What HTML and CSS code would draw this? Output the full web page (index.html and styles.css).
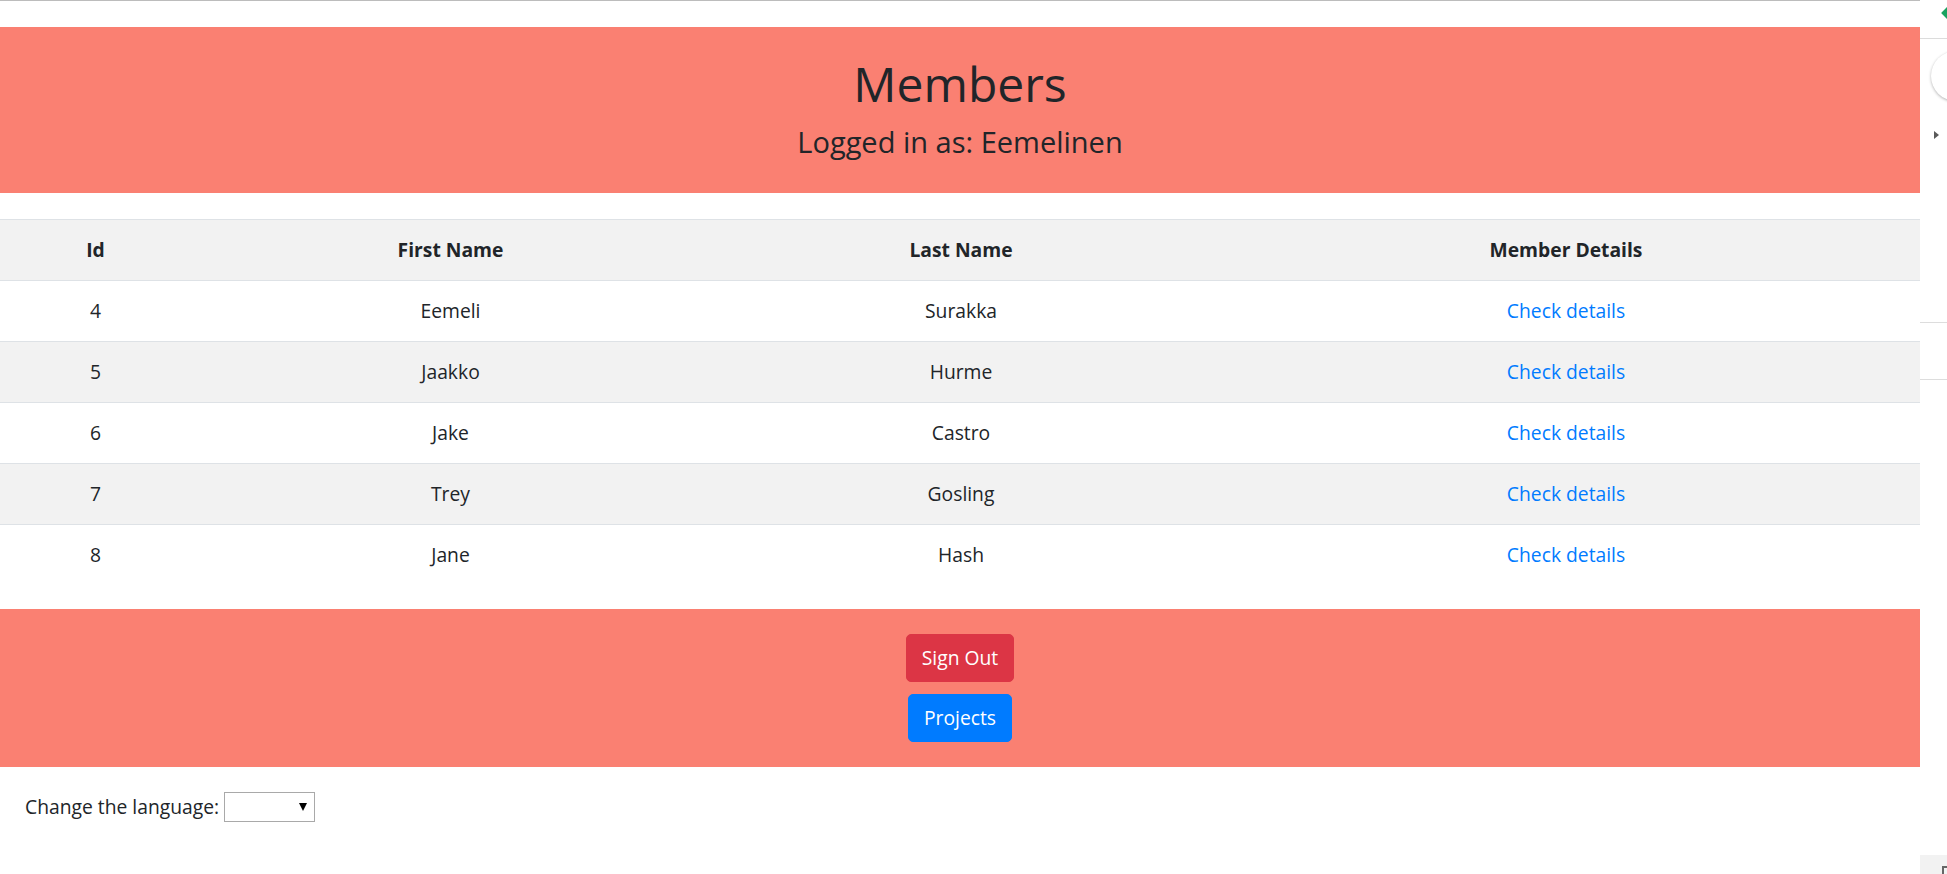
FILE: index.html
```html
<!DOCTYPE html>
<html lang="en">
<head>
<meta charset="utf-8">
<title>Members</title>
<link rel="stylesheet" href="styles.css">
</head>
<body>
<div class="layout">
  <main class="page">
    <header class="banner">
      <h1 class="banner-title">Members</h1>
      <h4 class="banner-sub">Logged in as: Eemelinen</h4>
    </header>

    <table class="members">
      <colgroup>
        <col class="c-id">
        <col class="c-first">
        <col class="c-last">
        <col class="c-details">
      </colgroup>
      <thead>
        <tr><th>Id</th><th>First Name</th><th>Last Name</th><th>Member Details</th></tr>
      </thead>
      <tbody>
        <tr><td>4</td><td>Eemeli</td><td>Surakka</td><td><a href="#">Check details</a></td></tr>
        <tr><td>5</td><td>Jaakko</td><td>Hurme</td><td><a href="#">Check details</a></td></tr>
        <tr><td>6</td><td>Jake</td><td>Castro</td><td><a href="#">Check details</a></td></tr>
        <tr><td>7</td><td>Trey</td><td>Gosling</td><td><a href="#">Check details</a></td></tr>
        <tr><td>8</td><td>Jane</td><td>Hash</td><td><a href="#">Check details</a></td></tr>
      </tbody>
    </table>

    <footer class="actions">
      <button class="btn btn-danger" type="button">Sign Out</button>
      <button class="btn btn-primary" type="button">Projects</button>
    </footer>

    <div class="lang">
      <label class="lang-label" for="lang">Change the language:</label>
      <span class="select-wrap"><select id="lang" class="lang-select"><option></option></select></span>
    </div>
  </main>

  <aside class="side">
    <div class="side-top"><span class="side-diamond"></span></div>
    <div class="side-circle"></div>
    <div class="side-tri"></div>
    <div class="side-line side-line-a"></div>
    <div class="side-line side-line-b"></div>
    <div class="side-spacer"></div>
    <div class="side-foot"><span class="side-corner"></span></div>
  </aside>
</div>
</body>
</html>
```

FILE: styles.css
```css
html, body {
  margin: 0;
  padding: 0;
  background: #ffffff;
}

body {
  font-family: "Open Sans", "Noto Sans", sans-serif;
  font-size: 19.3px;
  line-height: 30px;
  color: #212529;
  overflow: hidden;
}

.layout {
  display: flex;
  width: 1947px;
  height: 874px;
}

.page {
  width: 1920px;
  flex: 0 0 1920px;
  border-top: 1px solid #bcbcbc;
}

/* banner */
.banner {
  margin-top: 26px;
  background: #fa8072;
  text-align: center;
  padding: 27px 0 33px;
}

.banner-title {
  margin: 0 0 10px;
  font-size: 48px;
  line-height: 60px;
  font-weight: 500;
}

.banner-sub {
  margin: 0;
  font-size: 29px;
  line-height: 36px;
  font-weight: 500;
}

/* table */
.members {
  width: 1920px;
  margin-top: 26px;
  margin-bottom: 24px;
  border-collapse: collapse;
  table-layout: fixed;
}

.c-id { width: 191px; }
.c-first { width: 519px; }
.c-last { width: 502px; }
.c-details { width: 708px; }

.members th,
.members td {
  padding: 15px 0;
  line-height: 30px;
  text-align: center;
  border-top: 1px solid #dee2e6;
}

.members th {
  font-weight: 700;
}

.members thead tr,
.members tbody tr:nth-child(even) {
  background: #f2f2f2;
}

.members a {
  color: #007bff;
  text-decoration: none;
}

/* actions */
.actions {
  background: #fa8072;
  padding: 25px 0;
  display: flex;
  flex-direction: column;
  align-items: center;
  gap: 12px;
}

.btn {
  font-family: inherit;
  font-size: 19.3px;
  line-height: 30px;
  padding: 8px 15px;
  border-radius: 5px;
  color: #ffffff;
  cursor: pointer;
}

.btn-danger {
  background: #dc3545;
  border: 1px solid #dc3545;
}

.btn-primary {
  background: #007bff;
  border: 1px solid #007bff;
}

/* language */
.lang {
  display: flex;
  align-items: center;
  padding: 25px 25px;
}

.lang-label {
  margin-right: 5px;
}

.select-wrap {
  position: relative;
  display: inline-block;
}

.lang-select {
  appearance: none;
  -webkit-appearance: none;
  width: 91px;
  height: 30px;
  border: 1px solid #a9a9a9;
  border-radius: 0;
  background: #ffffff;
  margin: 0;
  display: block;
}

.select-wrap::after {
  content: "";
  position: absolute;
  right: 8px;
  top: 11px;
  border-left: 4px solid transparent;
  border-right: 4px solid transparent;
  border-top: 8px solid #000000;
  pointer-events: none;
}

/* right side panel */
.side {
  flex: 1;
  display: flex;
  flex-direction: column;
  overflow: hidden;
  background: #ffffff;
}

.side-top {
  height: 39px;
  border-bottom: 1px solid #dcdcdc;
  box-sizing: border-box;
  flex: 0 0 39px;
}

.side-diamond {
  display: block;
  width: 14px;
  height: 14px;
  margin: 6px 0 0 24px;
  background: #1aa260;
  transform: rotate(45deg);
}

.side-circle {
  flex: 0 0 50px;
  width: 50px;
  height: 50px;
  margin: 12px 0 0 11px;
  border-radius: 50%;
  background: #ffffff;
  box-shadow: 0 1px 3px rgba(0, 0, 0, 0.3);
}

.side-tri {
  flex: 0 0 0;
  width: 0;
  height: 0;
  margin: 30px 0 0 14px;
  border-top: 4px solid transparent;
  border-bottom: 4px solid transparent;
  border-left: 5px solid #5a5a5a;
}

.side-line {
  flex: 0 0 1px;
  height: 1px;
  background: #dddddd;
}

.side-line-a {
  margin-top: 183px;
}

.side-line-b {
  margin-top: 56px;
}

.side-spacer {
  flex: 1;
}

.side-foot {
  flex: 0 0 19px;
  height: 19px;
  background: #f2f2f2;
}

.side-corner {
  display: block;
  width: 5px;
  height: 9px;
  margin: 11px 0 0 22px;
  border-top: 2px solid #666666;
  border-left: 2px solid #666666;
}
```
